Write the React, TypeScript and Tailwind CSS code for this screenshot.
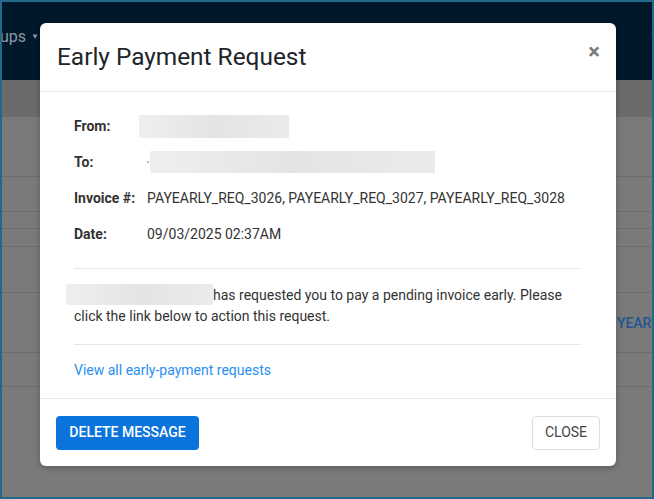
function Blur({ className }: { className: string }) {
  return (
    <span
      className={`inline-block rounded-[1px] bg-gradient-to-r from-[#efefef] via-[#e4e4e4] to-[#ebebeb] blur-[0.6px] ${className}`}
    />
  );
}

function Row({ label, children }: { label: string; children: React.ReactNode }) {
  return (
    <div className="flex h-[36px] items-center">
      <div className="w-[73px] shrink-0 text-[14px] font-bold text-[#333]">{label}</div>
      <div className="flex items-center text-[14px] text-[#333]">{children}</div>
    </div>
  );
}

export default function App() {
  const rowLines = [176, 211, 228, 246, 292, 352, 386];

  return (
    <div
      className="relative h-[499px] w-[654px] overflow-hidden border-2 border-[#22698b] bg-[#7a7a7a]"
      style={{ fontFamily: "Roboto, 'Liberation Sans', sans-serif" }}
    >
      {/* page behind the backdrop */}
      <div className="flex h-[78px] items-start justify-between bg-[#01172a] pt-[23px] text-[#8d98a4]">
        <div className="-ml-[2px] flex items-center gap-[5px] text-[16px]">
          ups
          <span className="text-[8px]">▼</span>
        </div>
        <div className="-mr-[10px] text-[17px] leading-none">C</div>
      </div>
      <div className="h-[37px] bg-[#6b6b6b]" />
      {rowLines.map((y) => (
        <div key={y} className="absolute left-0 right-0 h-px bg-[#6c6c6c]" style={{ top: y - 2 }} />
      ))}
      <div className="absolute right-[-7px] top-[311px] text-[14px] font-medium text-[#1f5593]">YEARL</div>

      {/* modal */}
      <div className="absolute left-[38px] top-[21px] flex h-[443px] w-[576px] flex-col rounded-[6px] bg-white shadow-[0_2px_6px_rgba(0,0,0,0.25)]">
        <div className="flex h-[69px] shrink-0 items-center justify-between border-b border-[#e6e6e6] pl-[17px] pr-[16px]">
          <h1 className="text-[24.4px] leading-none text-[#212529]">Early Payment Request</h1>
          <button className="-mt-[10px] text-[22px] font-bold leading-none text-[#7a7a7a]">×</button>
        </div>

        <div className="flex-1 px-[34px] pt-[16px]">
          <Row label="From:">
            <Blur className="-ml-[8px] h-[23px] w-[150px]" />
          </Row>
          <Row label="To:">
            <span className="mr-[1px] h-[2px] w-[2px] bg-[#bbb]" />
            <Blur className="h-[22px] w-[285px]" />
          </Row>
          <Row label="Invoice #:">PAYEARLY_REQ_3026, PAYEARLY_REQ_3027, PAYEARLY_REQ_3028</Row>
          <Row label="Date:">09/03/2025 02:37AM</Row>

          <div className="mr-px mt-[16px] border-t border-[#e6e6e6] pt-[15px]">
            <p className="text-[14px] leading-[21px] text-[#333]">
              <Blur className="-mb-[5px] -ml-[8px] h-[21px] w-[147px]" />
              <span className="whitespace-nowrap">has requested you to pay a pending invoice early. Please</span>
              <br />
              click the link below to action this request.
            </p>
          </div>

          <div className="mr-px mt-[17px] border-t border-[#e6e6e6] pt-[13px]">
            <a className="text-[14px] leading-[20px] text-[#2a8ff0]" href="#">
              View all early-payment requests
            </a>
          </div>
        </div>

        <div className="flex h-[68px] shrink-0 items-center justify-between border-t border-[#e6e6e6] pl-[16px] pr-[16px]">
          <button className="h-[34px] w-[143px] rounded-[4px] bg-[#0b74dc] text-[14px] font-medium text-white">
            DELETE MESSAGE
          </button>
          <button className="h-[34px] w-[68px] rounded-[4px] border border-[#dedede] bg-white text-[14px] text-[#444]">
            CLOSE
          </button>
        </div>
      </div>
    </div>
  );
}
